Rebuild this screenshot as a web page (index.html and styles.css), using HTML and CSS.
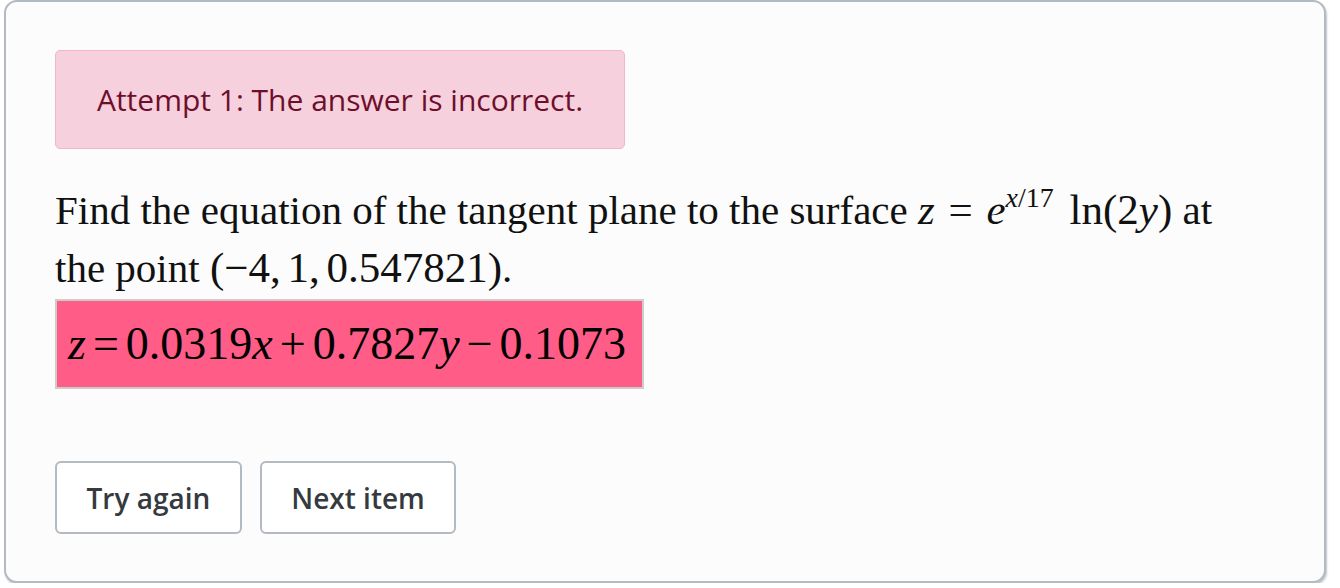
FILE: index.html
```html
<!DOCTYPE html>
<html lang="en">
<head>
<meta charset="utf-8">
<title>Tangent plane</title>
<link rel="stylesheet" href="styles.css">
</head>
<body>
<div class="card">
  <div class="alert">Attempt 1: The answer is incorrect.</div>
  <p class="question"><span class="line">Find the equation of the tangent plane to the surface <span class="math"><i>z</i> = <i>e</i><sup><i>x</i>/17</sup> ln(2<i>y</i>)</span> at</span><br><span class="line">the point <span class="math tight">(−4, 1, 0.547821)</span>.</span></p>
  <div class="answer"><i>z</i> = 0.0319<i>x</i> + 0.7827<i>y</i> − 0.1073</div>
  <div class="actions">
    <button class="btn">Try again</button>
    <button class="btn">Next item</button>
  </div>
</div>
</body>
</html>
```
FILE: styles.css
```css
html, body {
  margin: 0;
  padding: 0;
  background: #ffffff;
}
body {
  padding: 0 14px 0 4px;
}
.card {
  box-sizing: border-box;
  height: 583px;
  background: #fcfcfc;
  border: 2px solid #b3bac1;
  border-radius: 13px;
  box-shadow: 1px 2px 2px rgba(120, 128, 136, 0.45);
  padding: 48px 49px 0;
}
.alert {
  box-sizing: border-box;
  width: 570px;
  height: 99px;
  background: #f6d0dc;
  border: 1px solid #f0b7c9;
  border-radius: 5px;
  color: #6d0f2b;
  font-family: "Open Sans", "Noto Sans", sans-serif;
  font-size: 30px;
  line-height: 97px;
  text-align: center;
}
.question {
  margin: 32px 0 0;
  font-family: "Liberation Serif", serif;
  font-size: 41px;
  line-height: 58px;
  color: #111;
}
.line {
  white-space: nowrap;
}
.math {
  font-family: "Liberation Serif", serif;
  font-size: 43px;
  word-spacing: 3px;
}
.math.tight {
  word-spacing: -4px;
}
.math i {
  font-style: italic;
}
.math sup {
  font-size: 28px;
  line-height: 0;
  vertical-align: 17px;
  margin-right: 2px;
}
.answer {
  box-sizing: border-box;
  width: fit-content;
  height: 90px;
  margin-top: 2px;
  padding: 0 16px 0 11px;
  background: #ff5c87;
  border: 2px solid #cccccc;
  font-family: "Liberation Serif", serif;
  font-size: 46px;
  line-height: 86px;
  color: #000;
  word-spacing: -4.5px;
}
.actions {
  display: flex;
  gap: 18px;
  margin-top: 72px;
}
.btn {
  box-sizing: border-box;
  height: 73px;
  padding: 0 29.5px;
  background: #ffffff;
  border: 2px solid #b3bac1;
  border-radius: 6px;
  color: #343a40;
  font-family: "Open Sans", "Noto Sans", sans-serif;
  font-weight: 600;
  font-size: 28px;
  cursor: pointer;
}
```
